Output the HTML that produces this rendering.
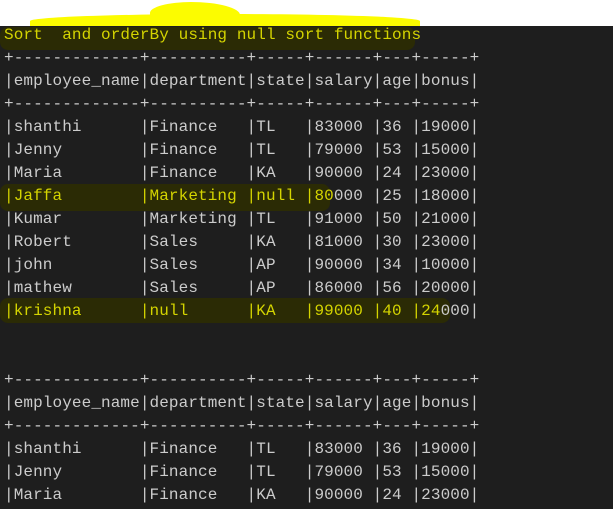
<!DOCTYPE html>
<html><head><style>
html,body{margin:0;padding:0;width:613px;height:509px;overflow:hidden;background:#fff;position:relative}
.term{position:absolute;left:0;top:26px;width:613px;height:483px;background:#1e1e1e}
pre{position:absolute;left:4px;margin:0;font-family:"Liberation Mono",monospace;font-size:16px;letter-spacing:0.1px;line-height:23px;color:#cccccc;white-space:pre}
.y{color:#d4d400}
.hl{position:absolute;background:#2b2b05;border-radius:8px}
.brush{position:absolute;background:#fcfc00}
</style></head><body>
<div class="brush" style="left:30px;top:14px;width:390px;height:14px;border-radius:50% 50% 0 0"></div>
<div class="brush" style="left:150px;top:2px;width:90px;height:24px;border-radius:50% 60% 0 0"></div>
<div class="term"></div>
<div class="hl" style="left:0;top:27px;width:415px;height:23px"></div>
<div class="hl" style="left:0;top:184px;width:330px;height:27px"></div>
<div class="hl" style="left:0;top:298px;width:450px;height:25px"></div>
<pre style="top:24px"><span class="y">Sort  and orderBy using null sort functions</span>
+-------------+----------+-----+------+---+-----+
|employee_name|department|state|salary|age|bonus|
+-------------+----------+-----+------+---+-----+
|shanthi      |Finance   |TL   |83000 |36 |19000|
|Jenny        |Finance   |TL   |79000 |53 |15000|
|Maria        |Finance   |KA   |90000 |24 |23000|
<span class="y">|Jaffa        |Marketing |null |80</span>000 |25 |18000|
|Kumar        |Marketing |TL   |91000 |50 |21000|
|Robert       |Sales     |KA   |81000 |30 |23000|
|john         |Sales     |AP   |90000 |34 |10000|
|mathew       |Sales     |AP   |86000 |56 |20000|
<span class="y">|krishna      |null      |KA   |99000 |40 |24</span>000|


+-------------+----------+-----+------+---+-----+
|employee_name|department|state|salary|age|bonus|
+-------------+----------+-----+------+---+-----+
|shanthi      |Finance   |TL   |83000 |36 |19000|
|Jenny        |Finance   |TL   |79000 |53 |15000|
|Maria        |Finance   |KA   |90000 |24 |23000|</pre>
</body></html>
